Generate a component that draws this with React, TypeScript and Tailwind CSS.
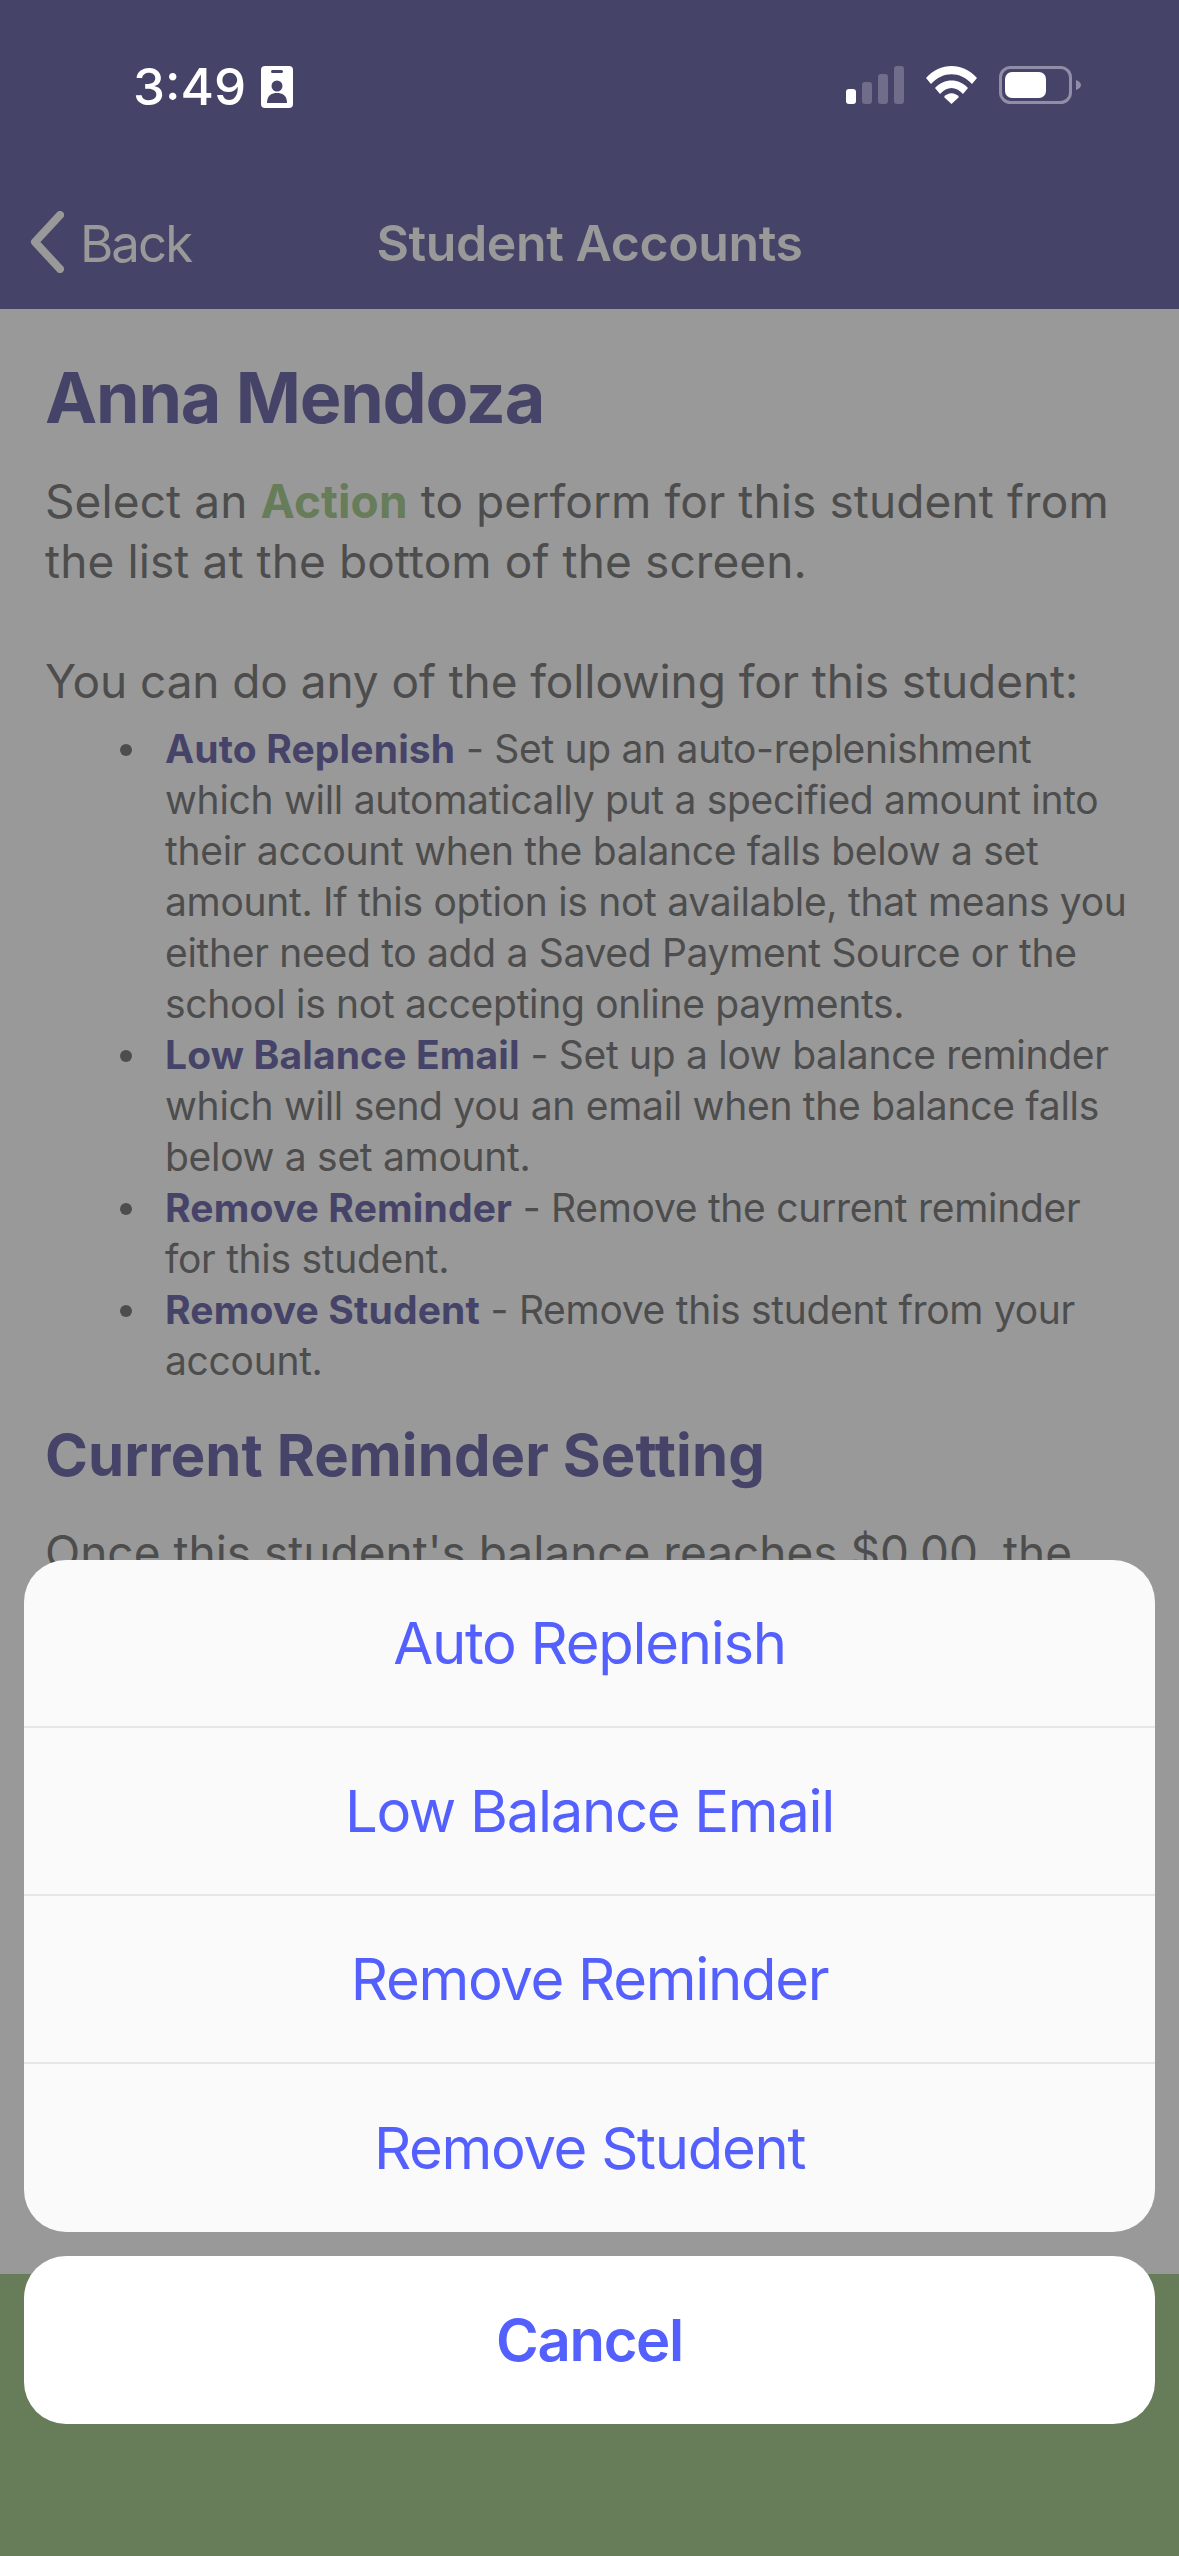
const items = [
  {
    title: "Auto Replenish",
    text: " - Set up an auto-replenishment which will automatically put a specified amount into their account when the balance falls below a set amount. If this option is not available, that means you either need to add a Saved Payment Source or the school is not accepting online payments.",
  },
  {
    title: "Low Balance Email",
    text: " - Set up a low balance reminder which will send you an email when the balance falls below a set amount.",
  },
  {
    title: "Remove Reminder",
    text: " - Remove the current reminder for this student.",
  },
  {
    title: "Remove Student",
    text: " - Remove this student from your account.",
  },
];

const actions = ["Auto Replenish", "Low Balance Email", "Remove Reminder", "Remove Student"];

const StatusBar = () => (
  <div className="flex h-[180px] items-start justify-between pl-[133px] pr-[98px] pt-[66px]">
    <div className="flex items-center gap-[15px]">
      <span className="text-[51px] leading-[42px] font-medium text-white">3:49</span>
      <svg width="32" height="42" viewBox="0 0 32 42">
        <rect width="32" height="42" rx="4" fill="#fff" />
        <rect x="10" y="4" width="12" height="3" rx="1.5" fill="#464369" />
        <circle cx="16" cy="20" r="5.5" fill="#464369" />
        <path d="M6 37 C6 29 11 27 16 27 C21 27 26 29 26 37 Z" fill="#464369" />
      </svg>
    </div>
    <div className="flex items-center gap-[22px]">
      <svg width="58" height="38" viewBox="0 0 58 38">
        <rect x="0" y="23" width="10" height="15" rx="3" fill="#fff" />
        <rect x="16" y="16" width="10" height="22" rx="3" fill="#706d8a" />
        <rect x="32" y="8" width="10" height="30" rx="3" fill="#706d8a" />
        <rect x="48" y="0" width="10" height="38" rx="3" fill="#706d8a" />
      </svg>
      <svg width="51" height="38" viewBox="0 0 51 38">
        <path d="M0 12 C14 -4 37 -4 51 12 L46 18 C34 5 17 5 5 18 Z" fill="#fff" />
        <path d="M9 22 C18 12 33 12 42 22 L37 28 C30 20 21 20 14 28 Z" fill="#fff" />
        <path d="M18 31 C22 26 29 26 33 31 L25.5 38 Z" fill="#fff" />
      </svg>
      <svg width="82" height="38" viewBox="0 0 82 38">
        <rect x="1.5" y="1.5" width="70" height="35" rx="10" fill="none" stroke="#908ea6" strokeWidth="3" />
        <rect x="6" y="6" width="41" height="26" rx="7" fill="#fff" />
        <path d="M77 14 C80 15 82 17 82 19 C82 21 80 23 77 24 Z" fill="#908ea6" />
      </svg>
    </div>
  </div>
);

const NavBar = () => (
  <div className="relative flex h-[129px] items-start justify-center pt-[18px]">
    <div className="absolute left-[30px] top-[31px] flex items-start">
      <svg width="34" height="62" viewBox="0 0 34 62">
        <path d="M30 4 L5 31 L30 58" fill="none" stroke="#999999" strokeWidth="8" strokeLinecap="round" strokeLinejoin="round" />
      </svg>
      <span className="ml-[16px] -mt-[12px] text-[51px] leading-[90px] tracking-[-2px] text-[#999999]">Back</span>
    </div>
    <span className="text-[50px] leading-[90px] font-semibold tracking-[-0.4px] text-[#999999]">Student Accounts</span>
  </div>
);

const App = () => {
  return (
    <div className="relative flex h-[2556px] w-[1179px] flex-col overflow-hidden bg-[#999999] font-['Inter',sans-serif]">
      <div className="bg-[#464369]">
        <StatusBar />
        <NavBar />
      </div>

      {/* page behind the sheet */}
      <div className="flex-1 overflow-hidden pl-[45px] pr-[47px] pt-[47px] text-[#4d4d4d]">
        <h1 className="text-[70px] leading-[84px] font-bold tracking-[-1.2px] text-[#464369]">Anna Mendoza</h1>
        <p className="mt-[31px] text-[46px] leading-[60px] tracking-[0.1px]">
          Select an <b className="font-bold text-[#677c58]">Action</b> to perform for this student from the list at the
          bottom of the screen.
        </p>
        <p className="mt-[60px] text-[46px] leading-[60px] tracking-[-0.1px]">
          You can do any of the following for this student:
        </p>
        <ul className="mt-[12px] pl-[120px] text-[39px] leading-[51px] tracking-[-0.3px]">
          {items.map((item) => (
            <li
              key={item.title}
              className="relative before:absolute before:left-[-45px] before:top-[21px] before:size-[12px] before:rounded-full before:bg-[#4d4d4d] before:content-['']"
            >
              <b className="font-bold tracking-[0.15px] text-[#464369]">{item.title}</b>
              {item.text}
            </li>
          ))}
        </ul>
        <h2 className="mt-[33px] text-[58px] leading-[72px] font-bold tracking-[0.1px] text-[#464369]">
          Current Reminder Setting
        </h2>
        <p className="mt-[31px] text-[46px] leading-[60px]">Once this student's balance reaches $0.00, the</p>
      </div>

      <div className="h-[282px] bg-[#677c58]" />

      {/* action sheet */}
      <div className="absolute inset-x-[24px] bottom-[132px] flex flex-col gap-[24px]">
        <div className="flex flex-col divide-y-2 divide-[#e6e6e6] rounded-[42px] bg-[#fafafa]">
          {actions.map((action) => (
            <div
              key={action}
              className="flex h-[168px] items-center justify-center text-[58px] tracking-[-1.3px] text-[#5460fe]"
            >
              {action}
            </div>
          ))}
        </div>
        <div className="flex h-[168px] items-center justify-center rounded-[42px] bg-white text-[58px] font-semibold tracking-[-1.3px] text-[#5460fe]">
          Cancel
        </div>
      </div>
    </div>
  );
};

export default App;
